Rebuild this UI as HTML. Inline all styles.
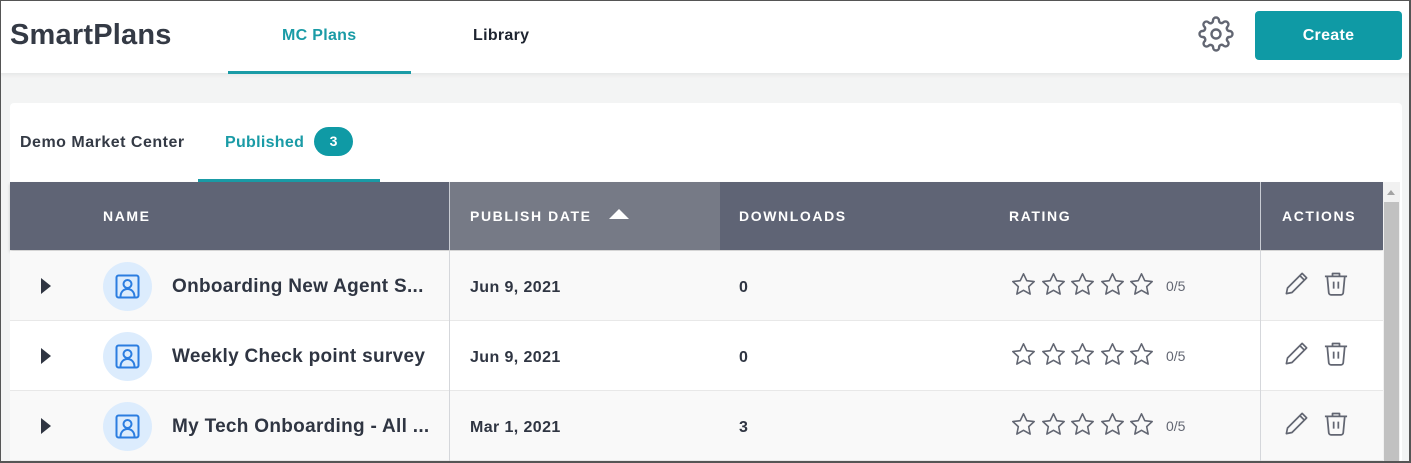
<!DOCTYPE html>
<html><head><meta charset="utf-8"><style>
*{box-sizing:border-box;margin:0;padding:0}
body{width:1411px;height:463px;overflow:hidden;background:#f3f4f4;font-family:"Liberation Sans",sans-serif;position:relative;color:#2f3542}
.a{position:absolute}
.frame{position:absolute;left:0;top:0;width:1411px;height:463px;border:1px solid #555;border-right:2px solid #555;border-bottom:2px solid #555;pointer-events:none;z-index:10}
.hdr{left:0;top:0;width:1411px;height:73px;background:#fff;box-shadow:0 2px 4px rgba(0,0,0,.06)}
.th{color:#fff;font-weight:bold;font-size:14px;letter-spacing:1.6px;top:208px}
.row{left:10px;width:1373px;height:70px;border-bottom:1px solid #e8e8e8}
.cell{font-size:16px;font-weight:bold;color:#2f3542;letter-spacing:0.4px}
.name{font-size:19px;font-weight:bold;color:#2f3542;left:172px;letter-spacing:0.3px}
</style></head><body>
<div class="a hdr"></div>
<div class="a" style="left:10px;top:19px;font-size:29px;font-weight:bold;color:#343a45;letter-spacing:0.2px">SmartPlans</div>
<div class="a" style="left:282px;top:27px;font-size:16px;font-weight:bold;color:#1a9ba6;letter-spacing:0.3px">MC Plans</div>
<div class="a" style="left:228px;top:71px;width:183px;height:3px;background:#1a9ba6"></div>
<div class="a" style="left:473px;top:27px;font-size:16px;font-weight:bold;color:#1e2430;letter-spacing:0.3px">Library</div>
<svg class="a" style="left:1198px;top:16px" width="36" height="36" viewBox="0 0 24 24" fill="none" stroke="#626672" stroke-width="1.6"><circle cx="12" cy="12" r="3"/><path d="M19.4 15a1.65 1.65 0 0 0 .33 1.82l.06.06a2 2 0 1 1-2.830 2.83l-.06-.06a1.65 1.65 0 0 0-1.82-.33 1.65 1.65 0 0 0-1 1.51V21a2 2 0 1 1-4 0v-.09A1.65 1.65 0 0 0 9 19.4a1.65 1.65 0 0 0-1.82.33l-.06.06a2 2 0 1 1-2.83-2.83l.06-.06A1.65 1.65 0 0 0 4.68 15a1.65 1.65 0 0 0-1.51-1H3a2 2 0 1 1 0-4h.09A1.65 1.65 0 0 0 4.6 9a1.65 1.65 0 0 0-.33-1.82l-.06-.06a2 2 0 1 1 2.83-2.83l.06.06A1.65 1.65 0 0 0 9 4.68a1.65 1.65 0 0 0 1-1.510V3a2 2 0 1 1 4 0v.09a1.65 1.65 0 0 0 1 1.51 1.65 1.65 0 0 0 1.82-.33l.06-.06a2 2 0 1 1 2.83 2.83l-.06.06A1.65 1.65 0 0 0 19.4 9a1.65 1.65 0 0 0 1.51 1H21a2 2 0 1 1 0 4h-.09a1.65 1.65 0 0 0-1.51 1z"/></svg>
<div class="a" style="left:1255px;top:11px;width:147px;height:49px;background:#0f9aa5;border-radius:4px;color:#fff;font-weight:bold;font-size:16px;text-align:center;line-height:50px;letter-spacing:0.3px">Create</div>

<div class="a" style="left:10px;top:103px;width:1392px;height:360px;background:#fff;border-radius:4px"></div>
<div class="a" style="left:20px;top:134px;font-size:16px;font-weight:bold;color:#343a45;letter-spacing:0.5px">Demo Market Center</div>
<div class="a" style="left:225px;top:134px;font-size:16px;font-weight:bold;color:#1a9ba6;letter-spacing:0.3px">Published</div>
<div class="a" style="left:314px;top:127px;width:39px;height:29px;border-radius:15px;background:#0f9aa5;color:#fff;font-weight:bold;font-size:14px;text-align:center;line-height:29px">3</div>
<div class="a" style="left:198px;top:179px;width:182px;height:3px;background:#1a9ba6"></div>

<div class="a" style="left:10px;top:182px;width:1373px;height:68px;background:#5f6475;box-shadow:0 2px 3px rgba(0,0,0,.2)"></div>
<div class="a" style="left:450px;top:182px;width:270px;height:68px;background:#767a86"></div>
<div class="a" style="left:449px;top:182px;width:1px;height:68px;background:#c9ccd3"></div>
<div class="a" style="left:1260px;top:182px;width:1px;height:68px;background:#c9ccd3"></div>
<div class="a th" style="left:103px">NAME</div>
<div class="a th" style="left:470px">PUBLISH DATE</div>
<div class="a" style="left:609px;top:209px;width:0;height:0;border-left:10px solid transparent;border-right:10px solid transparent;border-bottom:10px solid #fff"></div>
<div class="a th" style="left:739px">DOWNLOADS</div>
<div class="a th" style="left:1009px">RATING</div>
<div class="a th" style="left:1282px">ACTIONS</div>

<div class="a" style="left:1383px;top:182px;width:17px;height:281px;background:#f1f1f1"></div>
<div class="a" style="left:1387px;top:190px;width:0;height:0;border-left:4px solid transparent;border-right:4px solid transparent;border-bottom:5px solid #a3a3a3"></div>
<div class="a" style="left:1384px;top:202px;width:15px;height:261px;background:#c1c1c1"></div>

<div id="rows"></div>
<script>
var data=[["Onboarding New Agent S...","Jun 9, 2021","0","#f9f9f9"],["Weekly Check point survey","Jun 9, 2021","0","#fff"],["My Tech Onboarding - All ...","Mar 1, 2021","3","#f9f9f9"]];
var h="";
var star='<path d="M12 2.5l2.9 6.1 6.6.8-4.9 4.5 1.3 6.6L12 17.2l-5.9 3.3 1.3-6.6-4.9-4.5 6.6-.8z"/>';
data.forEach(function(d,i){
 var t=251+i*70;
 h+='<div class="a row" style="top:'+t+'px;background:'+d[3]+'"></div>';
 h+='<div class="a" style="left:449px;top:'+t+'px;width:1px;height:70px;background:#d5d7db"></div>';
 h+='<div class="a" style="left:1260px;top:'+t+'px;width:1px;height:70px;background:#d5d7db"></div>';
 h+='<div class="a" style="left:41px;top:'+(t+27)+'px;border-top:8px solid transparent;border-bottom:8px solid transparent;border-left:10px solid #2f3542"></div>';
 h+='<div class="a" style="left:103px;top:'+(t+11)+'px;width:49px;height:49px;border-radius:50%;background:#dcecfd"></div>';
 h+='<svg class="a" style="left:115px;top:'+(t+23)+'px" width="25" height="25" viewBox="0 0 25 25" fill="none" stroke="#2b7de0" stroke-width="2"><rect x="1.5" y="1.5" width="22" height="22" rx="2"/><circle cx="12.5" cy="10" r="4"/><path d="M5.5 23c0-5 3-8 7-8s7 3 7 8"/></svg>';
 h+='<div class="a name" style="top:'+(t+25)+'px">'+d[0]+'</div>';
 h+='<div class="a cell" style="left:470px;top:'+(t+28)+'px">'+d[1]+'</div>';
 h+='<div class="a cell" style="left:739px;top:'+(t+28)+'px">'+d[2]+'</div>';
 for(var s=0;s<5;s++) h+='<svg class="a" style="left:'+(1010+s*29.5)+'px;top:'+(t+20)+'px" width="27" height="27" viewBox="0 0 24 24" fill="none" stroke="#626672" stroke-width="1.4" stroke-linejoin="round">'+star+'</svg>';
 h+='<div class="a" style="left:1166px;top:'+(t+27)+'px;font-size:14px;color:#626672">0/5</div>';
 h+='<svg class="a" style="left:1283px;top:'+(t+19)+'px" width="27" height="27" viewBox="0 0 24 24" fill="none" stroke="#626672" stroke-width="1.5" stroke-linejoin="round"><path d="M17 3l4 4L8 20l-5 1 1-5z"/><path d="M15 5l4 4"/></svg>';
 h+='<svg class="a" style="left:1322px;top:'+(t+19)+'px" width="28" height="28" viewBox="0 0 24 24" fill="none" stroke="#626672" stroke-width="1.5" stroke-linejoin="round"><path d="M2.5 5.5h19"/><path d="M9 5.5V3h6v2.5"/><path d="M4.5 5.5l1.3 14a2 2 0 0 0 2 1.8h8.4a2 2 0 0 0 2-1.8l1.3-14"/><path d="M10 10v6M14 10v6"/></svg>';
});
document.getElementById("rows").innerHTML=h;
</script>
<div class="frame"></div>
</body></html>
